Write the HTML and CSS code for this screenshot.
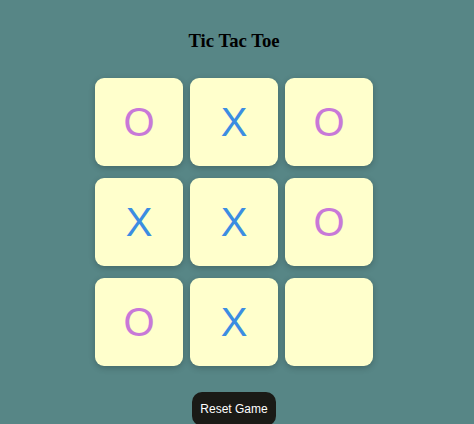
FILE: index.html
```html
<!DOCTYPE html>
<html>
<head>
<meta charset="utf-8">
<link rel="stylesheet" href="styles.css">
</head>
<body>
<div class="app">
  <h1 class="title">Tic Tac Toe</h1>
  <div class="board">
    <div class="cell o">O</div>
    <div class="cell x">X</div>
    <div class="cell o">O</div>
    <div class="cell x">X</div>
    <div class="cell x">X</div>
    <div class="cell o">O</div>
    <div class="cell o">O</div>
    <div class="cell x">X</div>
    <div class="cell"></div>
  </div>
  <button class="reset">Reset Game</button>
</div>
</body>
</html>
```
FILE: styles.css
```css
html, body {
  margin: 0;
  padding: 0;
  background: #578686;
}
.app {
  display: flex;
  flex-direction: column;
  align-items: center;
  padding: 30px 6px 0 0;
}
.title {
  margin: 0;
  font-family: "Liberation Serif", "Times New Roman", serif;
  font-weight: bold;
  font-size: 18.72px;
  line-height: 22px;
  color: #000;
}
.board {
  margin-top: 26px;
  display: grid;
  grid-template-columns: repeat(3, 88px);
  grid-auto-rows: 88px;
  column-gap: 7px;
  row-gap: 12px;
}
.cell {
  background: #ffffcc;
  border-radius: 9px;
  box-shadow: 0 2px 6px rgba(0, 0, 0, 0.22);
  display: flex;
  align-items: center;
  justify-content: center;
  font-family: "Liberation Sans", Arial, sans-serif;
  font-size: 40px;
}
.cell.x { color: #3b8de2; }
.cell.o { color: #c878d8; }
.reset {
  margin-top: 26px;
  background: #1a1a16;
  color: #fff;
  border: none;
  border-radius: 10px;
  padding: 10px 8px;
  font-family: "Liberation Sans", Arial, sans-serif;
  font-size: 12px;
}
```
